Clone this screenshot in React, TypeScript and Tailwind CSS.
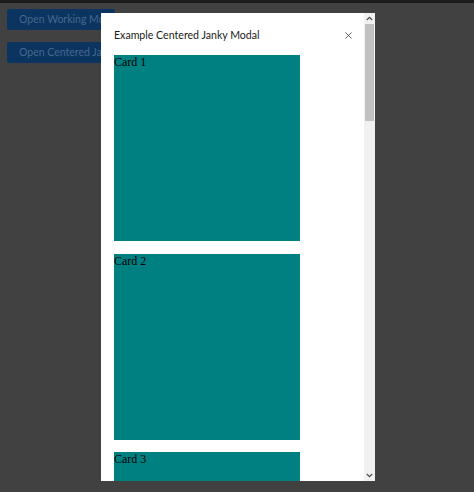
import { X } from 'lucide-react';

const cards = ['Card 1', 'Card 2', 'Card 3'];

function FakeScrollbar() {
  return (
    <div className="flex w-[11px] shrink-0 flex-col bg-[#f1f1f1]">
      <div className="flex h-[11px] items-center justify-center">
        <svg width="7" height="5" viewBox="0 0 7 5">
          <path d="M0.8 4 L3.5 1.3 L6.2 4" fill="none" stroke="#505050" strokeWidth="1.3" />
        </svg>
      </div>
      <div className="mx-[1px] h-[97px] bg-[#c1c1c1]" />
      <div className="flex-1" />
      <div className="flex h-[11px] items-center justify-center">
        <svg width="7" height="5" viewBox="0 0 7 5">
          <path d="M0.8 1 L3.5 3.7 L6.2 1" fill="none" stroke="#505050" strokeWidth="1.3" />
        </svg>
      </div>
    </div>
  );
}

export default function App() {
  return (
    <div className="relative h-[492px] w-[474px] overflow-hidden border-t-[3px] border-[#1c1c1c] bg-[#414141] font-['Lato',sans-serif]">
      <div className="flex flex-col items-start gap-[12px] px-[7px] pt-[6px]">
        <button className="h-[21px] w-[108px] overflow-hidden whitespace-nowrap rounded-[2px] bg-[#0b3460] pl-[12px] text-left text-[10.5px] text-[#46688d]">
          Open Working Modal
        </button>
        <button className="h-[21px] w-[140px] overflow-hidden whitespace-nowrap rounded-[2px] bg-[#0b3460] pl-[12px] text-left text-[10.5px] text-[#46688d]">
          Open Centered Janky Modal
        </button>
      </div>

      <div className="absolute left-[101px] top-[10px] flex h-[468px] w-[274px] bg-white">
        <div className="flex-1 overflow-hidden pl-[13px]">
          <div className="flex h-[42px] items-center justify-between pr-[10px] pt-[3px]">
            <span className="text-[10.6px] text-[#1a1a1a]">Example Centered Janky Modal</span>
            <X className="h-[11px] w-[11px] text-[#444]" strokeWidth={1.8} />
          </div>
          <div className="flex flex-col gap-[12.6px]">
            {cards.map((c) => (
              <div
                key={c}
                className="h-[186px] w-[186px] shrink-0 bg-[#008080] font-['Liberation_Serif',serif] text-[12px] leading-[14px] text-black"
              >
                {c}
              </div>
            ))}
          </div>
        </div>
        <FakeScrollbar />
      </div>
    </div>
  );
}
